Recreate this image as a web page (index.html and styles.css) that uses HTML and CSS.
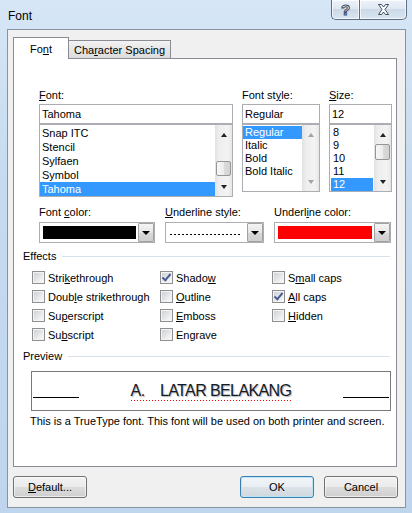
FILE: index.html
```html
<!DOCTYPE html>
<html lang="en">
<head>
    <meta charset="UTF-8">
    <meta name="viewport" content="width=device-width, initial-scale=1.0">
    <title>Font</title>

    <link rel="stylesheet" href="styles.css">
</head>
<body>

<div class="window">
    <div class="titlebar">
        <span class="title">Font</span>
        <div class="caption-buttons">
            <span class="cap-btn help">?</span>
            <span class="cap-btn close">
                <svg width="13" height="11" viewBox="0 0 13 11">
                    <path d="M1.5 0.5 L4.5 0.5 L6.5 3 L8.5 0.5 L11.5 0.5 L8 5.5 L11.5 10.5 L8.5 10.5 L6.5 8 L4.5 10.5 L1.5 10.5 L5 5.5 Z" fill="#fff" stroke="#3d4c60" stroke-width="1" stroke-linejoin="round"/>
                </svg>
            </span>
        </div>
    </div>

    <div class="client">
        <div class="tabs">
            <div class="tab active">Fo<u>n</u>t</div>
            <div class="tab">Cha<u>r</u>acter Spacing</div>
        </div>

        <div class="panel">
            <div class="font-grid">
                <div class="field">
                    <div class="label"><u>F</u>ont:</div>
                    <div class="textbox">Tahoma</div>
                    <div class="listbox font-list">
                        <ul>
                            <li>Snap ITC</li>
                            <li>Stencil</li>
                            <li>Sylfaen</li>
                            <li>Symbol</li>
                            <li class="selected">Tahoma</li>
                        </ul>
                        <div class="scrollbar">
                            <div class="sb-btn up"></div>
                            <div class="sb-track"><div class="sb-thumb"></div></div>
                            <div class="sb-btn down"></div>
                        </div>
                    </div>
                </div>

                <div class="field">
                    <div class="label">Font st<u>y</u>le:</div>
                    <div class="textbox">Regular</div>
                    <div class="listbox short-list">
                        <ul>
                            <li class="selected">Regular</li>
                            <li>Italic</li>
                            <li>Bold</li>
                            <li>Bold Italic</li>
                        </ul>
                        <div class="scrollbar disabled">
                            <div class="sb-btn up"></div>
                            <div class="sb-track"></div>
                            <div class="sb-btn down"></div>
                        </div>
                    </div>
                </div>

                <div class="field">
                    <div class="label"><u>S</u>ize:</div>
                    <div class="textbox">12</div>
                    <div class="listbox short-list size-list">
                        <ul>
                            <li>8</li>
                            <li>9</li>
                            <li>10</li>
                            <li>11</li>
                            <li class="selected">12</li>
                        </ul>
                        <div class="scrollbar">
                            <div class="sb-btn up"></div>
                            <div class="sb-track"><div class="sb-thumb"></div></div>
                            <div class="sb-btn down"></div>
                        </div>
                    </div>
                </div>
            </div>

            <div class="color-grid">
                <div class="field">
                    <div class="label">Font <u>c</u>olor:</div>
                    <div class="dropdown">
                        <div class="swatch black"></div>
                        <div class="dd-btn"></div>
                    </div>
                </div>
                <div class="field">
                    <div class="label"><u>U</u>nderline style:</div>
                    <div class="dropdown">
                        <div class="dash-line"></div>
                        <div class="dd-btn"></div>
                    </div>
                </div>
                <div class="field">
                    <div class="label">Underl<u>i</u>ne color:</div>
                    <div class="dropdown">
                        <div class="swatch red"></div>
                        <div class="dd-btn"></div>
                    </div>
                </div>
            </div>

            <div class="group-title">Effects<span class="rule"></span></div>
            <div class="effects">
                <div class="check"><span class="box"></span>Stri<u>k</u>ethrough</div>
                <div class="check"><span class="box checked"></span>Shado<u>w</u></div>
                <div class="check"><span class="box"></span>S<u>m</u>all caps</div>

                <div class="check"><span class="box"></span>Doub<u>l</u>e strikethrough</div>
                <div class="check"><span class="box"></span><u>O</u>utline</div>
                <div class="check"><span class="box checked"></span><u>A</u>ll caps</div>

                <div class="check"><span class="box"></span>Su<u>p</u>erscript</div>
                <div class="check"><span class="box"></span><u>E</u>mboss</div>
                <div class="check"><span class="box"></span><u>H</u>idden</div>

                <div class="check"><span class="box"></span>Su<u>b</u>script</div>
                <div class="check"><span class="box"></span>En<u>g</u>rave</div>
            </div>

            <div class="group-title preview-title">Preview<span class="rule"></span></div>
            <div class="preview">
                <span class="pv-line"></span>
                <span class="sample">A.    LATAR BELAKANG</span>
                <span class="pv-line"></span>
            </div>
            <div class="note">This is a TrueType font. This font will be used on both printer and screen.</div>
        </div>

        <div class="buttons">
            <button type="button" class="btn"><u>D</u>efault...</button>
            <button type="button" class="btn default">OK</button>
            <button type="button" class="btn">Cancel</button>
        </div>
    </div>
</div>

</body>
</html>
```

FILE: styles.css
```css
* {
    box-sizing: border-box;
}

html, body {
    margin: 0;
    padding: 0;
}

body {
    width: 412px;
    height: 513px;
    overflow: hidden;
    font-family: "Liberation Sans", Arial, sans-serif;
    font-size: 11px;
    color: #000;
}

u {
    text-underline-offset: 1px;
}

.window {
    width: 412px;
    height: 513px;
    padding: 0 6px 5px 7px;
    display: flex;
    flex-direction: column;
    background: linear-gradient(to bottom, #d6e6f6 0%, #c6dbf0 35%, #bed5ed 100%);
}

/* title bar */
.titlebar {
    height: 29px;
    display: flex;
    align-items: flex-start;
}

.title {
    font-size: 12px;
    margin: 9px 0 0 1px;
    color: #000;
}

.caption-buttons {
    margin-left: auto;
    margin-right: -1px;
    display: flex;
}

.cap-btn {
    height: 20px;
    display: flex;
    align-items: center;
    justify-content: center;
    border: 1px solid #5e6f84;
    border-top: none;
    background: linear-gradient(to bottom, #eef3f9 0%, #dfe8f2 45%, #cbd9e8 50%, #d9e5f1 100%);
    box-shadow: inset 0 0 0 1px rgba(255, 255, 255, 0.7);
}

.help {
    width: 28px;
    border-right: none;
    border-radius: 0 0 0 5px;
    font-size: 15px;
    font-weight: bold;
    color: #fff;
    -webkit-text-stroke: 1px #3d4c60;
}

.close {
    width: 48px;
    border-radius: 0 0 5px 0;
}

/* dialog client area */
.client {
    flex: 1;
    display: flex;
    flex-direction: column;
    background-color: #f0f0f0;
    border: 1px solid #8794a2;
    padding: 7px 8px 0 5px;
}

.tabs {
    display: flex;
    align-items: flex-end;
    height: 22px;
    margin-bottom: -1px;
    position: relative;
    z-index: 1;
}

.tab {
    border: 1px solid #898c95;
    border-bottom: none;
    text-align: center;
}

.tab.active {
    width: 56px;
    height: 22px;
    padding-top: 5px;
    background: #fff;
}

.tab:not(.active) {
    width: 102px;
    height: 18px;
    margin-bottom: 1px;
    padding-top: 3px;
    border-left: none;
    background: linear-gradient(to bottom, #f3f3f3, #e6e6e6 50%, #dcdcdc);
}

.panel {
    height: 409px;
    background: #fff;
    border: 1px solid #898c95;
    padding: 30px 6px 0 9px;
}

/* font / style / size */
.font-grid {
    display: grid;
    grid-template-columns: 194px 78px 63px;
    column-gap: 9px;
    margin-left: 16px;
    align-items: start;
}

.label {
    line-height: 13px;
    margin-bottom: 2px;
    white-space: nowrap;
}

.textbox {
    height: 20px;
    border: 1px solid #abadb3;
    padding-left: 2px;
    line-height: 18px;
}

.listbox {
    display: flex;
    border: 1px solid #abadb3;
    height: 73px;
}

.listbox.short-list {
    height: 68px;
}

.listbox ul {
    flex: 1;
    list-style: none;
    margin: 0;
    padding: 1px 0 0 0;
}

.listbox li {
    line-height: 14px;
    padding-left: 2px;
    white-space: nowrap;
}

.short-list li {
    line-height: 13px;
}

.size-list ul {
    padding: 1px 1px 0 1px;
}

.listbox li.selected {
    background-color: #3399ff;
    color: #fff;
}

.scrollbar {
    width: 17px;
    display: flex;
    flex-direction: column;
    background: linear-gradient(to right, #e2e2e2, #eeeeee 25%, #f3f3f3 75%, #e6e6e6);
}

.sb-btn {
    height: 17px;
    display: flex;
    align-items: center;
    justify-content: center;
}

.sb-btn::before {
    content: "";
    border-left: 3.5px solid transparent;
    border-right: 3.5px solid transparent;
}

.sb-btn.up::before {
    border-bottom: 4px solid #222;
    margin-top: 3px;
}

.sb-btn.down::before {
    border-top: 4px solid #222;
    margin-bottom: 1px;
}

.disabled .sb-btn.up::before {
    border-bottom-color: #a3a3a3;
}

.disabled .sb-btn.down::before {
    border-top-color: #a3a3a3;
}

.sb-track {
    flex: 1;
}

.sb-thumb {
    height: 15px;
    margin: 19px 1px 0 1px;
    border: 1px solid #969696;
    border-radius: 2px;
    background: linear-gradient(to right, #f7f7f7, #ececec 50%, #dcdcdc 51%, #d2d2d2);
}

.size-list .sb-thumb {
    height: 16px;
    margin-top: 2px;
}

/* colours and underline */
.color-grid {
    display: grid;
    grid-template-columns: 116px 99px 117px;
    column-gap: 10px;
    margin: 9px 0 0 16px;
}

.color-grid .label {
    margin-bottom: 3px;
}

.dropdown {
    height: 21px;
    display: flex;
    align-items: stretch;
    border: 1px solid #abadb3;
}

.swatch {
    flex: 1;
    margin: 3px 2px 3px 3px;
}

.swatch.black {
    background-color: #000;
}

.swatch.red {
    background-color: #ff0000;
}

.dash-line {
    flex: 1;
    height: 1px;
    margin: 11px 5px 0 4px;
    background: repeating-linear-gradient(to right, #000 0, #000 2px, transparent 2px, transparent 4px);
}

.dd-btn {
    width: 16px;
    border: 1px solid #a2a2a2;
    border-radius: 1px;
    background: linear-gradient(to bottom, #f4f4f4, #e6e6e6 50%, #d8d8d8 51%, #cfcfcf);
    display: flex;
    align-items: center;
    justify-content: center;
}

.dd-btn::before {
    content: "";
    border-left: 4px solid transparent;
    border-right: 4px solid transparent;
    border-top: 4px solid #000;
    margin-top: 1px;
}

/* group boxes */
.group-title {
    display: flex;
    align-items: center;
    line-height: 13px;
    margin-top: 7px;
}

.group-title .rule {
    flex: 1;
    height: 1px;
    margin-left: 6px;
    background-color: #d8e1ea;
}

.preview-title {
    margin-top: 6px;
}

.effects {
    display: grid;
    grid-template-columns: 128px 112px 1fr;
    margin: 5px 0 0 9px;
}

.check {
    height: 19px;
    display: flex;
    align-items: center;
    white-space: nowrap;
}

.box {
    width: 13px;
    height: 13px;
    margin-right: 3px;
    border: 1px solid #8f8f8f;
    background: linear-gradient(135deg, #c9cdd3, #eef0f2 70%, #f8f8f8);
    box-shadow: inset 0 0 0 1px #f4f4f4;
    position: relative;
}

.box.checked::after {
    content: "";
    position: absolute;
    left: 3px;
    top: 0px;
    width: 3px;
    height: 7px;
    border-right: 2px solid #4a5e90;
    border-bottom: 2px solid #4a5e90;
    transform: rotate(40deg);
}

/* preview */
.preview {
    height: 40px;
    margin: 8px -1px 0 8px;
    padding: 0 1px;
    border: 1px solid #7a7a7a;
    display: flex;
    justify-content: space-between;
    align-items: flex-end;
}

.pv-line {
    width: 46px;
    height: 1px;
    margin-bottom: 12px;
    background-color: #000;
}

.sample {
    font-size: 16px;
    line-height: 18px;
    letter-spacing: -0.6px;
    white-space: pre;
    margin-bottom: 9px;
    padding-bottom: 1px;
    color: #161a28;
    text-shadow: 1px 1px 1px rgba(0, 0, 0, 0.3);
    background: repeating-linear-gradient(to right, #ff0000 0, #ff0000 1px, transparent 1px, transparent 3px) left bottom / 100% 1px no-repeat;
}

.note {
    line-height: 13px;
    margin: 4px 0 0 7px;
    white-space: nowrap;
}

/* bottom buttons */
.buttons {
    display: flex;
    margin: 9px -1px 0 0;
}

.btn {
    width: 74px;
    height: 22px;
    padding: 0;
    font-family: inherit;
    font-size: 11px;
    color: #000;
    border: 1px solid #707070;
    border-radius: 3px;
    background: linear-gradient(to bottom, #f2f2f2 0%, #ebebeb 49%, #dddddd 50%, #cfcfcf 100%);
    box-shadow: inset 0 0 0 1px rgba(255, 255, 255, 0.6);
}

.btn.default {
    margin-left: auto;
    margin-right: 10px;
    border-color: #3c7fb1;
    box-shadow: inset 0 0 0 1px #b9e3f7;
    background: linear-gradient(to bottom, #f1f5f8 0%, #e9eef2 49%, #dbe2e8 50%, #d0d8df 100%);
}
```
